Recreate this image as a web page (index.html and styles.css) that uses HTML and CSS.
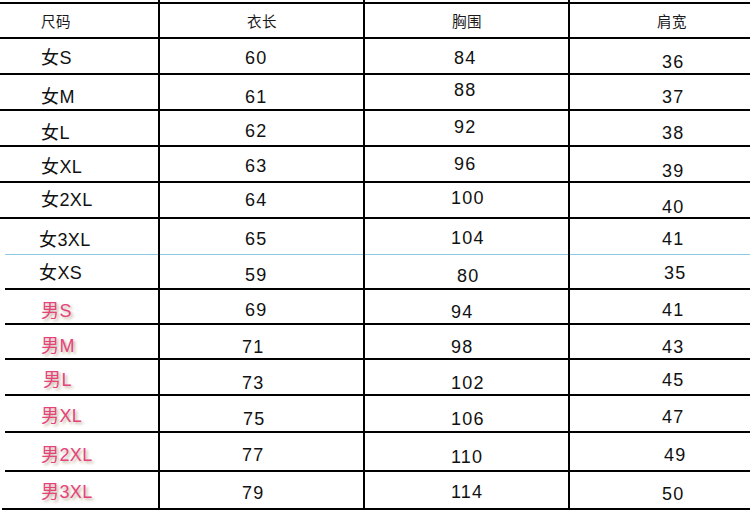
FILE: index.html
```html
<!DOCTYPE html>
<html lang="zh">
<head>
<meta charset="utf-8">
<title>尺码表</title>
<link rel="stylesheet" href="styles.css">
</head>
<body>
<div class="chart">
  <div class="row top"><div class="c"></div><div class="c"></div><div class="c"></div><div class="c"></div></div>
  <div class="row head h37">
    <div class="c c1 hd">尺码</div><div class="c c2 hd">衣长</div><div class="c c3 hd">胸围</div><div class="c c4 hd">肩宽</div>
  </div>
  <div class="row h36">
    <div class="c c1 s2">女S</div><div class="c c2 s2">60</div><div class="c c3 s2">84</div><div class="c c4 s6">36</div>
  </div>
  <div class="row h36">
    <div class="c c1 s5">女M</div><div class="c c2 s5">61</div><div class="c c3 m2">88</div><div class="c c4 s5">37</div>
  </div>
  <div class="row h36">
    <div class="c c1 s5">女L</div><div class="c c2">62</div><div class="c c3 m1">92</div><div class="c c4 s5">38</div>
  </div>
  <div class="row h36">
    <div class="c c1">女XL</div><div class="c c2 s2">63</div><div class="c c3 s0">96</div><div class="c c4 s7">39</div>
  </div>
  <div class="row h36">
    <div class="c c1 s0">女2XL</div><div class="c c2 s0">64</div><div class="c c3 m2 nx">100</div><div class="c c4 s7">40</div>
  </div>
  <div class="row h36 blue">
    <div class="c c1 s4 nx1">女3XL</div><div class="c c2">65</div><div class="c c3 s2 nx">104</div><div class="c c4">41</div>
  </div>
  <div class="row h35 lower">
    <div class="c c1 s1 nx1">女XS</div><div class="c c2">59</div><div class="c c3 s4 wx">80</div><div class="c c4 s1 wx">35</div>
  </div>
  <div class="row h35 lower">
    <div class="c c1 s4 men">男S</div><div class="c c2">69</div><div class="c c3 s5 nx">94</div><div class="c c4">41</div>
  </div>
  <div class="row h35 lower">
    <div class="c c1 s4 men">男M</div><div class="c c2 s5 nx">71</div><div class="c c3 s5 nx">98</div><div class="c c4 s5">43</div>
  </div>
  <div class="row h36 lower">
    <div class="c c1 men wx">男L</div><div class="c c2 s6 nx">73</div><div class="c c3 s6 nx">102</div><div class="c c4">45</div>
  </div>
  <div class="row h37 lower">
    <div class="c c1 s2 men">男XL</div><div class="c c2 s5 nx1">75</div><div class="c c3 s5 nx">106</div><div class="c c4">47</div>
  </div>
  <div class="row h39 lower">
    <div class="c c1 men">男2XL</div><div class="c c2 nx">77</div><div class="c c3 s5 nx">110</div><div class="c c4 wx">49</div>
  </div>
  <div class="row h38 last">
    <div class="c c1 s2 men">男3XL</div><div class="c c2 nx">79</div><div class="c c3 s2 nx">114</div><div class="c c4 s4">50</div>
  </div>
</div>
</body>
</html>
```

FILE: styles.css
```css
html, body {
  margin: 0;
  padding: 0;
  background: #ffffff;
}

body {
  width: 750px;
  height: 512px;
  overflow: hidden;
  font-family: "Liberation Sans", Arial, "Noto Sans CJK SC", sans-serif;
  color: #111111;
}

.chart {
  width: 750px;
  display: flex;
  flex-direction: column;
}

.row {
  --x: 0px;
  --line: #000000;
  display: grid;
  grid-template-columns: 160px 205px 205px 1fr;
  box-sizing: border-box;
  background: linear-gradient(var(--line), var(--line)) var(--x) 100% / 100% 2px no-repeat;
}

.row.top {
  height: 2px;
  background: none;
}

.row.head {
  background:
    linear-gradient(#000, #000) 0 0 / 100% 2px no-repeat,
    linear-gradient(#000, #000) 0 100% / 100% 2px no-repeat;
}

.row.blue {
  background: linear-gradient(#8ecadf, #8ecadf) 5px 100% / 100% 1px no-repeat;
}

.row.lower { --x: 5px; }
.row.last { --x: 2px; }

.h35 { height: 35px; }
.h36 { height: 36px; }
.h37 { height: 37px; }
.h38 { height: 38px; }
.h39 { height: 39px; }

.c {
  box-sizing: border-box;
  display: flex;
  align-items: center;
  border-right: 2px solid #000000;
  padding-top: 6px;
  padding-bottom: 2px;
  font-size: 18px;
  line-height: 20px;
  letter-spacing: 1.2px;
  white-space: nowrap;
}

.c:last-child { border-right: none; }

.c1 {
  padding-left: 41px;
  letter-spacing: 0.4px;
  font-family: "Liberation Sans", "Noto Sans CJK SC", sans-serif;
}
.c2 { padding-left: 85px; }
.c3 { padding-left: 89px; }
.c4 { padding-left: 92px; }

.c.hd {
  padding-top: 2px;
  padding-bottom: 2px;
  font-family: "Noto Sans CJK SC", sans-serif;
  font-size: 14.5px;
  letter-spacing: 0.5px;
  color: #1a1a1a;
}
.c1.hd { padding-left: 41px; }
.c2.hd, .c3.hd, .c4.hd { padding-left: 87px; }

.nx { padding-left: 82px; }
.c3.nx { padding-left: 86px; }
.c1.nx1 { padding-left: 39px; }
.c2.nx1 { padding-left: 83px; }
.c1.wx { padding-left: 43px; }
.c3.wx { padding-left: 92px; }
.c4.wx { padding-left: 94px; }

.s0 { padding-top: 0; }
.s1 { padding-top: 2px; }
.s2 { padding-top: 4px; }
.s4 { padding-top: 8px; }
.s5 { padding-top: 10px; }
.s6 { padding-top: 12px; }
.s7 { padding-top: 14px; }
.m1 { padding-top: 0; padding-bottom: 4px; }
.m2 { padding-top: 0; padding-bottom: 6px; }

.men {
  color: #e4437c;
  text-shadow: 2px 2px 3px rgba(120, 85, 30, 0.45);
}
```
